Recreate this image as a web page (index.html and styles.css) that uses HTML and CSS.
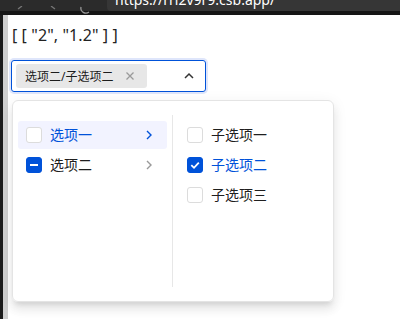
FILE: index.html
```html
<!DOCTYPE html>
<html lang="zh-CN">
  <head>
    <meta charset="UTF-8" />
    <meta name="viewport" content="width=device-width, initial-scale=1.0" />
    <link rel="stylesheet" href="styles.css">
    <title>cascader</title>
  </head>
  <body>
    <div class="chrome">
      <div class="nav">
        <svg width="100" height="11" viewBox="0 0 100 11">
          <path d="M22 0 L18 3" stroke="#777" stroke-width="1.3" fill="none"/>
          <path d="M51 0 L55 3" stroke="#777" stroke-width="1.3" fill="none"/>
          <path d="M81 1 A5 5 0 0 0 89 6" stroke="#999" stroke-width="1.3" fill="none"/>
        </svg>
      </div>
      <div class="address"><span class="url">https://rri2v9r9.csb.app/</span></div>
    </div>
    <div class="strip"></div>
    <div class="frame">
      <div class="edge"></div>
      <div class="gutter"></div>
      <div class="page">
        <div class="value">[ [ "2", "1.2" ] ]</div>

        <div class="select">
          <div class="tag">
            <span>选项二/子选项二</span>
            <svg class="tag-close" width="16" height="16" viewBox="0 0 16 16">
              <path d="M4.5 4.5 L11.5 11.5 M11.5 4.5 L4.5 11.5" stroke="#9a9a9a" stroke-width="1.3" fill="none"/>
            </svg>
          </div>
          <svg class="arrow" width="16" height="16" viewBox="0 0 16 16">
            <path d="M4 10 L8 6 L12 10" stroke="#333" stroke-width="1.5" fill="none"/>
          </svg>
        </div>

        <div class="panel">
          <div class="menu menu1">
            <div class="item expanded">
              <span class="checkbox"></span>
              <span class="label">选项一</span>
              <svg class="more" width="16" height="16" viewBox="0 0 16 16">
                <path d="M6 4 L10 8 L6 12" stroke="#0052d9" stroke-width="1.4" fill="none"/>
              </svg>
            </div>
            <div class="item">
              <span class="checkbox half">
                <svg width="16" height="16" viewBox="0 0 16 16"><path d="M4 8 H12" stroke="#fff" stroke-width="2"/></svg>
              </span>
              <span class="label">选项二</span>
              <svg class="more" width="16" height="16" viewBox="0 0 16 16">
                <path d="M6 4 L10 8 L6 12" stroke="#999" stroke-width="1.4" fill="none"/>
              </svg>
            </div>
          </div>
          <div class="menu">
            <div class="item">
              <span class="checkbox"></span>
              <span class="label">子选项一</span>
            </div>
            <div class="item active">
              <span class="checkbox checked">
                <svg width="16" height="16" viewBox="0 0 16 16"><path d="M4.3 8.2 L7 10.8 L11.8 5.6" stroke="#fff" stroke-width="1.8" fill="none"/></svg>
              </span>
              <span class="label">子选项二</span>
            </div>
            <div class="item">
              <span class="checkbox"></span>
              <span class="label">子选项三</span>
            </div>
          </div>
        </div>
      </div>
    </div>
  </body>
</html>
```

FILE: styles.css
```css
body {
  margin: 0;
  background: #fff;
  font-family: "Noto Sans", "Noto Sans CJK SC", sans-serif;
  color: rgba(0, 0, 0, 0.9);
}
.chrome {
  height: 11px;
  background: #2b2b2b;
  display: flex;
}
.nav {
  width: 107px;
}
.address {
  flex: 1;
  background: #363636;
  overflow: hidden;
  border-radius: 0 0 0 4px;
}
.url {
  display: block;
  margin-top: -9px;
  padding-left: 8px;
  color: #fff;
  font-size: 14px;
  line-height: 18px;
}
.strip {
  height: 4px;
  background: #151515;
}
.frame {
  display: flex;
  height: 304px;
}
.edge {
  width: 3px;
  background: #1b1b1b;
}
.gutter {
  width: 5px;
  background: #cfcfcf;
}
.page {
  flex: 1;
  padding: 9px 0 0 3px;
}
.value {
  font-size: 16px;
  line-height: 22px;
  padding-left: 1px;
  color: #222;
  letter-spacing: 0.1px;
}
.select {
  box-sizing: border-box;
  margin-top: 14px;
  width: 195px;
  height: 32px;
  border: 1px solid #0052d9;
  border-radius: 3px;
  box-shadow: 0 0 0 2px #dfe6fb;
  display: flex;
  align-items: center;
  padding: 0 8px 0 4px;
}
.tag {
  height: 24px;
  width: 131px;
  box-sizing: border-box;
  background: #e7e7e7;
  border-radius: 3px;
  display: flex;
  align-items: center;
  padding: 0 9px;
  font-size: 12px;
  color: rgba(0, 0, 0, 0.9);
}
.tag-close {
  margin-left: auto;
}
.arrow {
  margin-left: auto;
}
.panel {
  margin-top: 8px;
  margin-left: 1px;
  width: 322px;
  box-sizing: border-box;
  border: 1px solid #e4e4e4;
  border-radius: 6px;
  padding: 14px 0;
  display: flex;
  box-shadow: 0 3px 14px 2px rgba(0, 0, 0, 0.05), 0 8px 10px 1px rgba(0, 0, 0, 0.06), 0 5px 5px -3px rgba(0, 0, 0, 0.1);
}
.menu {
  width: 160px;
  height: 172px;
  box-sizing: border-box;
  padding: 6px 6px;
  display: flex;
  flex-direction: column;
  gap: 2px;
}
.menu1 {
  border-right: 1px solid #e7e7e7;
  padding: 6px 5px;
}
.item {
  height: 28px;
  border-radius: 3px;
  display: flex;
  align-items: center;
  padding: 0 10px 0 8px;
  font-size: 14px;
}
.item.expanded {
  background: #f2f3ff;
  color: #0052d9;
}
.item.active {
  color: #0052d9;
}
.checkbox {
  width: 16px;
  height: 16px;
  box-sizing: border-box;
  border: 1px solid #dcdcdc;
  border-radius: 3px;
  background: #fff;
  margin-right: 8px;
  display: flex;
  align-items: center;
  justify-content: center;
}
.checkbox svg {
  flex: none;
}
.checkbox.half,
.checkbox.checked {
  background: #0052d9;
  border-color: #0052d9;
}
.label {
  line-height: 22px;
}
.more {
  margin-left: auto;
}
```
